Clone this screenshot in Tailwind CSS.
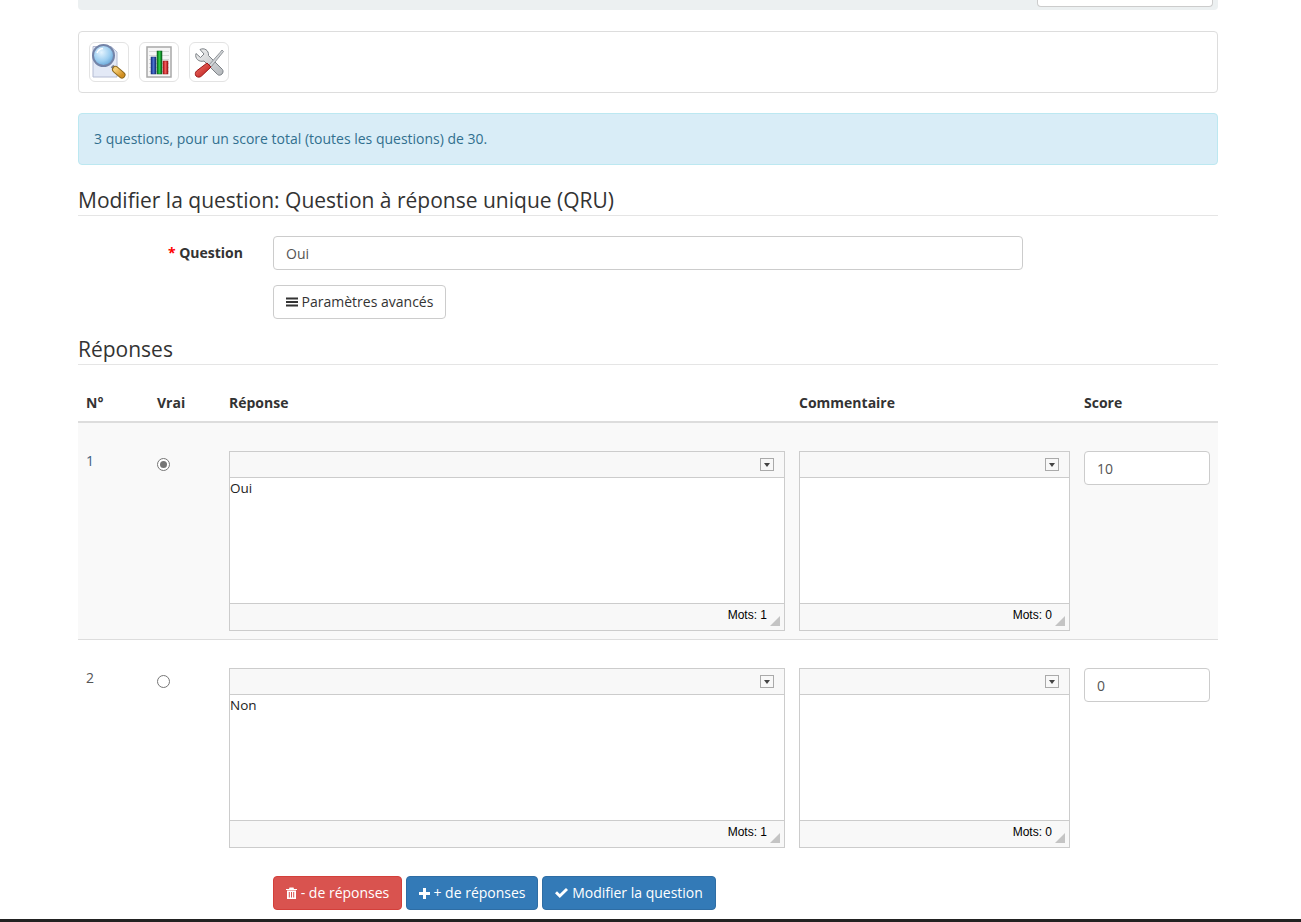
<!DOCTYPE html>
<html lang="fr">

<head>
    <meta charset="UTF-8">
    <script src="https://cdn.jsdelivr.net/npm/@tailwindcss/browser@4"></script>
    <title>Modifier la question</title>
</head>

<body class="bg-white text-[#333] text-[14px] leading-[20px] font-['Open_Sans',sans-serif] h-[922px] overflow-hidden flex flex-col">
    <main class="w-[1140px] ml-[78px] flex-1">
        <!-- top bar -->
        <div class="h-[10px] bg-[#ecf0f1] rounded-b-[4px] flex justify-end pr-[5px]">
            <div class="w-[176px] h-[7px] bg-white border border-t-0 border-[#ccc] rounded-b-[4px]"></div>
        </div>

        <!-- toolbar -->
        <div class="mt-[21px] h-[62px] border border-[#ddd] rounded-[4px] flex items-start gap-[10px] pt-[10px] pl-[10px]">
            <a class="w-[40px] h-[40px] border border-[#e3e3e3] rounded-[6px] block overflow-hidden">
                <svg width="38" height="38" viewBox="1 1 38 38">
                    <defs>
                        <radialGradient id="glass" cx="40%" cy="35%" r="70%">
                            <stop offset="0" stop-color="#e4f4ff" />
                            <stop offset="0.6" stop-color="#9bcdf0" />
                            <stop offset="1" stop-color="#5f9fd2" />
                        </radialGradient>
                        <linearGradient id="handle" x1="0" y1="0" x2="1" y2="1">
                            <stop offset="0" stop-color="#f7d078" />
                            <stop offset="1" stop-color="#d18f22" />
                        </linearGradient>
                    </defs>
                    <path d="M4 4.500H22L28 10V35H4Z" fill="#e3e9f6" stroke="#b4bbd2" />
                    <path d="M23 24L26 27" stroke="#7d8192" stroke-width="3.500" />
                    <path d="M26.500 27.500L33 33" stroke="#8f6a1e" stroke-width="7" stroke-linecap="round" />
                    <path d="M26.500 27.500L33 33" stroke="url(#handle)" stroke-width="5" stroke-linecap="round" />
                    <circle cx="14.500" cy="13.500" r="10.500" fill="url(#glass)" stroke="#7484a8" stroke-width="2" />
                    <path d="M8 11A7 7 0 0 1 14 6.500" fill="none" stroke="#fff" stroke-width="1.500" />
                </svg>
            </a>
            <a class="w-[40px] h-[40px] border border-[#e3e3e3] rounded-[6px] block overflow-hidden">
                <svg width="38" height="38" viewBox="1 1 38 38">
                    <defs>
                        <linearGradient id="blue" x1="0" x2="1" y1="0" y2="0">
                            <stop offset="0" stop-color="#14308a" />
                            <stop offset="0.5" stop-color="#4a70cc" />
                            <stop offset="1" stop-color="#142c78" />
                        </linearGradient>
                        <linearGradient id="green" x1="0" x2="1" y1="0" y2="0">
                            <stop offset="0" stop-color="#06701a" />
                            <stop offset="0.5" stop-color="#2ecb48" />
                            <stop offset="1" stop-color="#066216" />
                        </linearGradient>
                        <linearGradient id="red" x1="0" x2="1" y1="0" y2="0">
                            <stop offset="0" stop-color="#b01414" />
                            <stop offset="0.5" stop-color="#ee5a5a" />
                            <stop offset="1" stop-color="#a01212" />
                        </linearGradient>
                    </defs>
                    <rect x="8" y="5" width="24" height="30" fill="#f6f6f6" stroke="#a8a8a8" stroke-width="1.500" />
                    <path d="M10 9.500H30M10 13.500H30M10 17.500H30M10 21.500H30M10 25.500H30M10 29.500H30" stroke="#d8d8d8" />
                    <rect x="12" y="15" width="5" height="17" fill="url(#blue)" stroke="#1a2f70" stroke-width="0.500" />
                    <rect x="18" y="9" width="5" height="23" fill="url(#green)" stroke="#0a5a18" stroke-width="0.500" />
                    <rect x="24" y="19" width="5" height="13" fill="url(#red)" stroke="#8a1010" stroke-width="0.500" />
                </svg>
            </a>
            <a class="w-[40px] h-[40px] border border-[#e3e3e3] rounded-[6px] block overflow-hidden">
                <svg width="38" height="38" viewBox="1 1 38 38">
                    <defs>
                        <linearGradient id="metal" x1="0" y1="0" x2="1" y2="1">
                            <stop offset="0" stop-color="#f0f0f0" />
                            <stop offset="1" stop-color="#b4b8bc" />
                        </linearGradient>
                        <linearGradient id="grip" x1="0" y1="0" x2="1" y2="1">
                            <stop offset="0" stop-color="#f2786e" />
                            <stop offset="1" stop-color="#b81414" />
                        </linearGradient>
                    </defs>
                    <path d="M7 11.500L11.500 15.500L15 12L11 7.500C15 5.500 20 8 19.500 13.500L33.500 27.500C34.500 29 34 31 33 32C31.500 33.500 29.500 33.500 28.500 32.500L15 19C10 20.500 5.500 16.500 7 11.500Z" fill="url(#metal)" stroke="#7c8186" />
                    <path d="M20 23L31 10.500L33 8L34.500 9.500L32.500 12L22 25Z" fill="#d2d5d8" stroke="#7c8186" stroke-width="0.800" />
                    <path d="M18 21L22 25L12.500 34C11 35.500 8.500 35.500 7 34C6 32.500 6 30.500 7.500 29Z" fill="url(#grip)" stroke="#9a1616" />
                </svg>
            </a>
        </div>

        <!-- info -->
        <div class="mt-[20px] h-[52px] bg-[#d9edf7] border border-[#bce8f1] rounded-[4px] text-[#31708f] px-[15px] flex items-center">
            3 questions, pour un score total (toutes les questions) de 30.
        </div>

        <h2 class="mt-[20px] h-[31px] text-[21px] leading-[31px] border-b border-[#e5e5e5] pb-0">Modifier la question: Question à réponse unique (QRU)</h2>

        <!-- question -->
        <div class="mt-[20px] flex items-center">
            <label class="w-[165px] text-right font-bold"><span class="text-[#f00]">*</span> Question</label>
            <div class="ml-[30px] w-[750px] h-[34px] border border-[#ccc] rounded-[4px] px-[12px] pt-[1px] flex items-center text-[#555]">Oui</div>
        </div>
        <button class="mt-[15px] ml-[195px] h-[34px] w-[173px] border border-[#ccc] rounded-[4px] bg-white flex items-center justify-center gap-[4px]">
            <svg width="12" height="12" viewBox="0 0 12 12" fill="#333"><path d="M0 1.500H12V3.500H0ZM0 5H12V7H0ZM0 8.500H12V10.500H0Z" /></svg>
            Paramètres avancés
        </button>

        <h2 class="mt-[15px] h-[31px] text-[21px] leading-[30px] border-b border-[#e5e5e5]">Réponses</h2>

        <!-- table -->
        <div class="mt-[18px] pt-[2px] h-[40px] grid grid-cols-[71px_72px_570px_285px_142px] font-bold border-b-2 border-[#ddd] items-center">
            <div class="pl-[8px]">N°</div>
            <div class="pl-[8px]">Vrai</div>
            <div class="pl-[8px]">Réponse</div>
            <div class="pl-[8px]">Commentaire</div>
            <div class="pl-[8px]">Score</div>
        </div>

        <div class="h-[217px] pt-[28px] grid grid-cols-[71px_72px_570px_285px_142px] bg-[#f9f9f9] border-b border-[#ddd]">
            <div class="pl-[8px] text-[#3f5f80]">1</div>
            <div class="pl-[8px] pt-[7px]">
                <span class="w-[13px] h-[13px] rounded-full border border-[#767676] bg-white flex items-center justify-center"><span class="w-[7px] h-[7px] rounded-full bg-[#757575]"></span></span>
            </div>
            <div class="pl-[8px]">
                <div class="w-[556px] h-[180px] border border-[#ccc] flex flex-col bg-white">
                    <div class="h-[26px] shrink-0 bg-[#f8f8f8] border-b border-[#ccc] flex justify-end items-center pr-[10px]">
                        <span class="w-[14px] h-[13px] border border-[#aaa] flex items-center justify-center"><span class="w-0 h-0 border-x-[3px] border-x-transparent border-t-[4px] border-t-[#444]"></span></span>
                    </div>
                    <div class="flex-1 text-[#222] text-[13.5px]">Oui</div>
                    <div class="h-[27px] shrink-0 bg-[#f8f8f8] border-t border-[#ccc] relative font-['Liberation_Sans',sans-serif] text-[12px] text-black text-right pr-[17px] leading-[22px]">Mots: 1
                        <span class="absolute right-[4px] bottom-[4px] w-0 h-0 border-l-[10px] border-l-transparent border-b-[10px] border-b-[#c4c4c4]"></span>
                    </div>
                </div>
            </div>
            <div class="pl-[8px]">
                <div class="w-[271px] h-[180px] border border-[#ccc] flex flex-col bg-white">
                    <div class="h-[26px] shrink-0 bg-[#f8f8f8] border-b border-[#ccc] flex justify-end items-center pr-[10px]">
                        <span class="w-[14px] h-[13px] border border-[#aaa] flex items-center justify-center"><span class="w-0 h-0 border-x-[3px] border-x-transparent border-t-[4px] border-t-[#444]"></span></span>
                    </div>
                    <div class="flex-1"></div>
                    <div class="h-[27px] shrink-0 bg-[#f8f8f8] border-t border-[#ccc] relative font-['Liberation_Sans',sans-serif] text-[12px] text-black text-right pr-[17px] leading-[22px]">Mots: 0
                        <span class="absolute right-[4px] bottom-[4px] w-0 h-0 border-l-[10px] border-l-transparent border-b-[10px] border-b-[#c4c4c4]"></span>
                    </div>
                </div>
            </div>
            <div class="pl-[8px]">
                <div class="w-[126px] h-[34px] border border-[#ccc] rounded-[4px] bg-white px-[12px] pt-[1px] flex items-center text-[#555]">10</div>
            </div>
        </div>

        <div class="h-[217px] pt-[28px] grid grid-cols-[71px_72px_570px_285px_142px]">
            <div class="pl-[8px] text-[#555]">2</div>
            <div class="pl-[8px] pt-[7px]">
                <span class="block w-[13px] h-[13px] rounded-full border border-[#767676] bg-white"></span>
            </div>
            <div class="pl-[8px]">
                <div class="w-[556px] h-[180px] border border-[#ccc] flex flex-col bg-white">
                    <div class="h-[26px] shrink-0 bg-[#f8f8f8] border-b border-[#ccc] flex justify-end items-center pr-[10px]">
                        <span class="w-[14px] h-[13px] border border-[#aaa] flex items-center justify-center"><span class="w-0 h-0 border-x-[3px] border-x-transparent border-t-[4px] border-t-[#444]"></span></span>
                    </div>
                    <div class="flex-1 text-[#222] text-[13.5px]">Non</div>
                    <div class="h-[27px] shrink-0 bg-[#f8f8f8] border-t border-[#ccc] relative font-['Liberation_Sans',sans-serif] text-[12px] text-black text-right pr-[17px] leading-[22px]">Mots: 1
                        <span class="absolute right-[4px] bottom-[4px] w-0 h-0 border-l-[10px] border-l-transparent border-b-[10px] border-b-[#c4c4c4]"></span>
                    </div>
                </div>
            </div>
            <div class="pl-[8px]">
                <div class="w-[271px] h-[180px] border border-[#ccc] flex flex-col bg-white">
                    <div class="h-[26px] shrink-0 bg-[#f8f8f8] border-b border-[#ccc] flex justify-end items-center pr-[10px]">
                        <span class="w-[14px] h-[13px] border border-[#aaa] flex items-center justify-center"><span class="w-0 h-0 border-x-[3px] border-x-transparent border-t-[4px] border-t-[#444]"></span></span>
                    </div>
                    <div class="flex-1"></div>
                    <div class="h-[27px] shrink-0 bg-[#f8f8f8] border-t border-[#ccc] relative font-['Liberation_Sans',sans-serif] text-[12px] text-black text-right pr-[17px] leading-[22px]">Mots: 0
                        <span class="absolute right-[4px] bottom-[4px] w-0 h-0 border-l-[10px] border-l-transparent border-b-[10px] border-b-[#c4c4c4]"></span>
                    </div>
                </div>
            </div>
            <div class="pl-[8px]">
                <div class="w-[126px] h-[34px] border border-[#ccc] rounded-[4px] bg-white px-[12px] pt-[1px] flex items-center text-[#555]">0</div>
            </div>
        </div>

        <!-- actions -->
        <div class="mt-[19px] ml-[195px] flex gap-[4px] text-white">
            <button class="h-[34px] w-[129px] bg-[#d9534f] border border-[#d43f3a] rounded-[4px] flex items-center justify-center gap-[4px]">
                <svg width="11" height="12" viewBox="0 0 11 12" fill="#fff"><path d="M3.500 0.500H7.500L8 2H11V3H0V2H3ZM1 3.500H10V12H1ZM2.800 5V10.500H3.800V5ZM5 5V10.500H6V5ZM7.200 5V10.500H8.200V5Z" fill-rule="evenodd" /></svg>
                - de réponses
            </button>
            <button class="h-[34px] w-[132px] bg-[#337ab7] border border-[#2e6da4] rounded-[4px] flex items-center justify-center gap-[3px] pl-[1px]">
                <svg width="11" height="11" viewBox="0 0 11 11" fill="#fff"><path d="M4 0H7V4H11V7H7V11H4V7H0V4H4Z" /></svg>
                + de réponses
            </button>
            <button class="h-[34px] w-[174px] bg-[#337ab7] border border-[#2e6da4] rounded-[4px] flex items-center justify-center gap-[4px]">
                <svg width="13" height="10" viewBox="0 0 13 10" fill="#fff"><path d="M0 5.200L2 3.200L4.800 6L11 0L13 2L4.800 10Z" /></svg>
                Modifier la question
            </button>
        </div>
    </main>
    <footer class="h-[3px] bg-[#222] shrink-0"></footer>
</body>

</html>
